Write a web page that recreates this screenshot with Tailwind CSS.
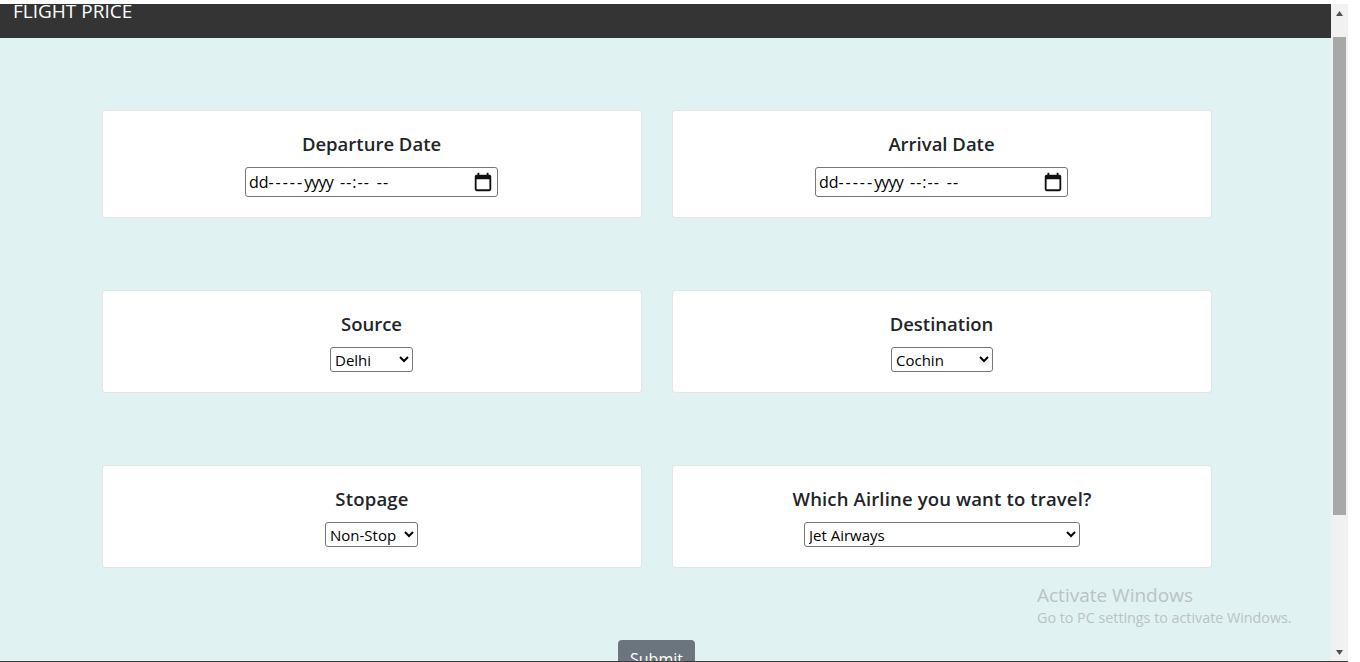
<!DOCTYPE html>
<html lang="en">
<head>
    <title>Flight Price</title>
    <meta charset="utf-8">
    <script src="https://cdn.jsdelivr.net/npm/@tailwindcss/browser@4"></script>
</head>
<body class="h-[662px] w-[1360px] overflow-hidden bg-white font-['Open_Sans',sans-serif] text-[#212529]">
    <div class="relative flex h-[662px] w-[1348px] flex-col pt-[4px]">
        <div class="flex min-h-0 flex-1">
            <!-- Page -->
            <div class="relative min-w-0 flex-1 overflow-hidden bg-[#e0f2f1]">
                <header class="h-[34px] overflow-hidden bg-[#343434] pl-[13px] text-[19px] leading-[14px] text-white">FLIGHT PRICE</header>

                <form class="flex flex-col items-start pt-[72px] pl-[102px]">
                    <div class="grid w-[1110px] grid-cols-2 gap-x-[30px]">
                        <!-- Dates -->
                        <div class="mb-[72px] flex h-[108px] flex-col items-center rounded-[4px] border border-black/10 bg-white pt-[20px]">
                            <h5 class="mr-[1px] text-[18.5px] leading-[26px] font-semibold">Departure Date</h5>
                            <div class="mt-[10px] mr-[1px] flex h-[30px] w-[253px] items-center justify-between rounded-[3px] border border-[#767676] pr-[3px] pl-[3px] text-[16px] text-black">
                                <span class="whitespace-nowrap"><span class="tracking-[-0.1px]">dd</span><span class="tracking-[2px]">-----</span><span class="tracking-[-0.8px]">yyyy</span><span class="ml-[7px] tracking-[1px]">--:--</span><span class="ml-[7px] tracking-[1px]">--</span></span>
                                <svg class="h-[22px] w-[22px]" viewBox="0 0 24 24" fill="#111"><path d="M19 4h-1V2h-2v2H8V2H6v2H5a2 2 0 0 0-2 2v14a2 2 0 0 0 2 2h14a2 2 0 0 0 2-2V6a2 2 0 0 0-2-2zm0 16H5V9h14v11z"/></svg>
                            </div>
                        </div>
                        <div class="mb-[72px] flex h-[108px] flex-col items-center rounded-[4px] border border-black/10 bg-white pt-[20px]">
                            <h5 class="mr-[1px] text-[18.5px] leading-[26px] font-semibold">Arrival Date</h5>
                            <div class="mt-[10px] mr-[1px] flex h-[30px] w-[253px] items-center justify-between rounded-[3px] border border-[#767676] pr-[3px] pl-[3px] text-[16px] text-black">
                                <span class="whitespace-nowrap"><span class="tracking-[-0.1px]">dd</span><span class="tracking-[2px]">-----</span><span class="tracking-[-0.8px]">yyyy</span><span class="ml-[7px] tracking-[1px]">--:--</span><span class="ml-[7px] tracking-[1px]">--</span></span>
                                <svg class="h-[22px] w-[22px]" viewBox="0 0 24 24" fill="#111"><path d="M19 4h-1V2h-2v2H8V2H6v2H5a2 2 0 0 0-2 2v14a2 2 0 0 0 2 2h14a2 2 0 0 0 2-2V6a2 2 0 0 0-2-2zm0 16H5V9h14v11z"/></svg>
                            </div>
                        </div>

                        <!-- Places -->
                        <div class="mb-[72px] flex h-[103px] flex-col items-center rounded-[4px] border border-black/10 bg-white pt-[20px]">
                            <h5 class="mr-[1px] text-[18.5px] leading-[26px] font-semibold">Source</h5>
                            <select class="mt-[10px] mr-[1px] h-[25px] w-[83px] rounded-[3px] border border-[#767676] bg-white text-[15px] text-black"><option>Delhi</option></select>
                        </div>
                        <div class="mb-[72px] flex h-[103px] flex-col items-center rounded-[4px] border border-black/10 bg-white pt-[20px]">
                            <h5 class="mr-[1px] text-[18.5px] leading-[26px] font-semibold">Destination</h5>
                            <select class="mt-[10px] h-[25px] w-[102px] rounded-[3px] border border-[#767676] bg-white text-[15px] text-black"><option>Cochin</option></select>
                        </div>

                        <!-- Stops and airline -->
                        <div class="flex h-[103px] flex-col items-center rounded-[4px] border border-black/10 bg-white pt-[20px]">
                            <h5 class="text-[18.5px] leading-[26px] font-semibold tracking-[0.2px]">Stopage</h5>
                            <select class="mt-[10px] mr-[1px] h-[25px] w-[93px] rounded-[3px] border border-[#767676] bg-white text-[15px] text-black"><option>Non-Stop</option></select>
                        </div>
                        <div class="flex h-[103px] flex-col items-center rounded-[4px] border border-black/10 bg-white pt-[20px]">
                            <h5 class="text-[18.5px] leading-[26px] font-semibold tracking-[0.15px]">Which Airline you want to travel?</h5>
                            <select class="mt-[10px] h-[25px] w-[276px] rounded-[3px] border border-[#767676] bg-white text-[15px] text-black"><option>Jet Airways</option></select>
                        </div>
                    </div>

                    <button type="button" class="mt-[72px] ml-[516px] h-[38px] w-[77px] rounded-[4px] bg-[#6c757d] text-[16px] text-white">Submit</button>
                </form>

                <!-- Watermark -->
                <div class="absolute top-[578px] left-[1037px] whitespace-nowrap text-[#b9c4c4]">
                    <div class="text-[19px] leading-[26px]">Activate Windows</div>
                    <div class="text-[14.3px] leading-[20px]">Go to PC settings to activate Windows.</div>
                </div>
            </div>

            <!-- Scrollbar -->
            <div class="flex w-[17px] flex-col bg-[#f1f1f1]">
                <svg class="mt-[7px] ml-[5px] h-[5px] w-[7px]" viewBox="0 0 7 5" fill="#505050"><path d="M3.5 0 7 5H0z"/></svg>
                <div class="mt-[21px] ml-[2px] h-[478px] w-[13px] bg-[#a8a8a8]"></div>
                <svg class="mt-[135px] ml-[5px] h-[5px] w-[7px]" viewBox="0 0 7 5" fill="#505050"><path d="M0 0h7L3.5 5z"/></svg>
            </div>
        </div>
        <div class="h-px bg-[#3c3c34]"></div>
    </div>
</body>
</html>
